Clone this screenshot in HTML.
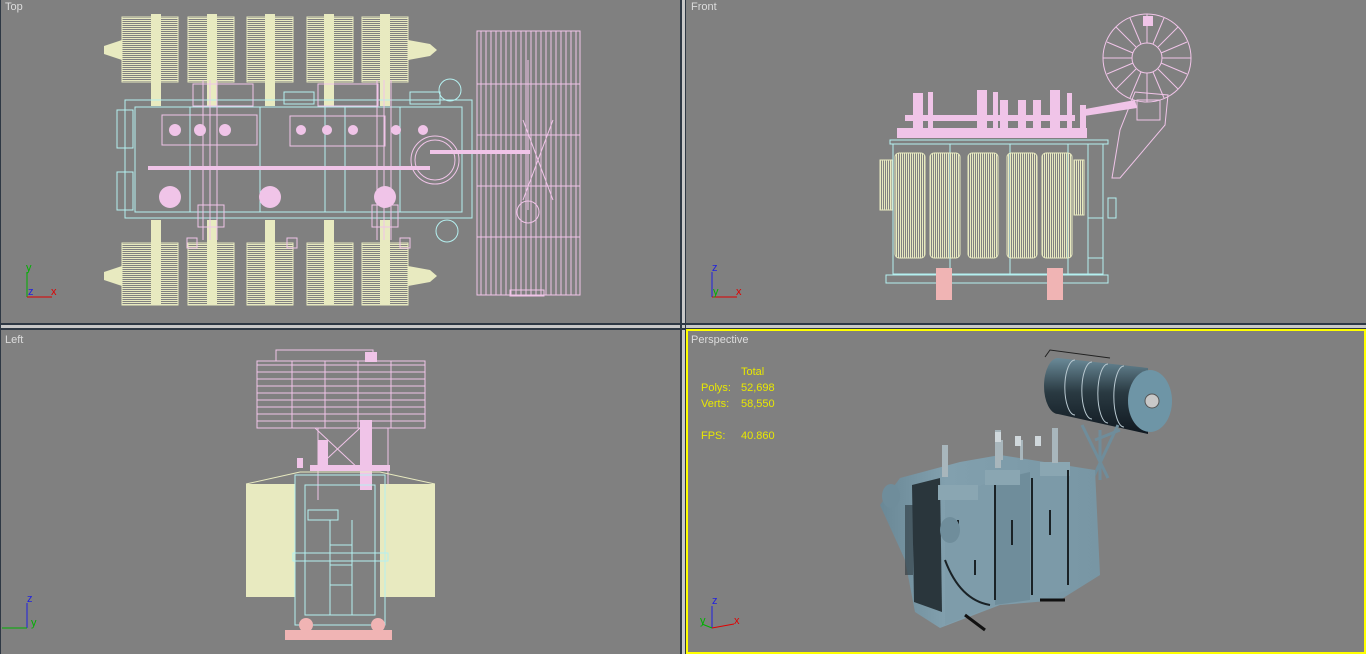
<!DOCTYPE html>
<html><head><meta charset="utf-8"><style>
html,body{margin:0;padding:0;background:#c8c8c8;width:1366px;height:654px;overflow:hidden}
svg{display:block}
text{font-family:"Liberation Sans",sans-serif;font-size:11px}
</style></head><body>
<svg width="1366" height="654" viewBox="0 0 1366 654" xmlns="http://www.w3.org/2000/svg">
<defs>
<pattern id="hy" width="4" height="2" patternUnits="userSpaceOnUse"><line x1="0" y1="0.5" x2="4" y2="0.5" stroke="#e8eac0" stroke-width="1"/></pattern>
<pattern id="vy" width="2" height="4" patternUnits="userSpaceOnUse"><line x1="0.5" y1="0" x2="0.5" y2="4" stroke="#e8eac0" stroke-width="1"/></pattern>
<pattern id="vp" width="5" height="4" patternUnits="userSpaceOnUse"><line x1="1" y1="0" x2="1" y2="4" stroke="#f0c4e8" stroke-width="1"/></pattern>
<linearGradient id="cyl" x1="0" y1="0" x2="0" y2="1"><stop offset="0" stop-color="#6a8a98"/><stop offset="0.45" stop-color="#2a3a42"/><stop offset="1" stop-color="#101820"/></linearGradient>
<linearGradient id="body" x1="0" y1="0" x2="1" y2="0"><stop offset="0" stop-color="#6a8896"/><stop offset="0.3" stop-color="#82a0ae"/><stop offset="1" stop-color="#7896a4"/></linearGradient>
</defs>
<rect x="0" y="0" width="1366" height="654" fill="#c8c8c8"/>
<rect x="1" y="0" width="679" height="323" fill="#808080"/>
<rect x="686" y="0" width="680" height="323" fill="#808080"/>
<rect x="1" y="330" width="679" height="324" fill="#808080"/>
<rect x="686" y="330" width="680" height="324" fill="#808080"/>
<rect x="0" y="0" width="1" height="654" fill="#2e3844"/>
<rect x="680" y="0" width="2" height="654" fill="#2e3844"/>
<rect x="685" y="0" width="1" height="654" fill="#2e3844"/>
<rect x="0" y="323" width="1366" height="2" fill="#2e3844"/>
<rect x="0" y="328" width="1366" height="2" fill="#2e3844"/>
<rect x="687" y="330" width="678" height="323" fill="none" stroke="#ffff00" stroke-width="2"/>

<text x="5" y="10" fill="#dcdcdc">Top</text>
<text x="691" y="10" fill="#dcdcdc">Front</text>
<text x="5" y="343" fill="#dcdcdc">Left</text>
<text x="691" y="343" fill="#dcdcdc">Perspective</text>
<g fill="#e8e800">
<text x="741" y="375">Total</text>
<text x="701" y="391">Polys:</text><text x="741" y="391">52,698</text>
<text x="701" y="407">Verts:</text><text x="741" y="407">58,550</text>
<text x="701" y="439">FPS:</text><text x="741" y="439">40.860</text>
</g>

<g font-size="9">
<g transform="translate(27,297)"><line x1="0" y1="0" x2="0" y2="-25" stroke="#00b000"/><line x1="0" y1="0" x2="25" y2="0" stroke="#e00000"/><text x="-1" y="-26" fill="#00b000" font-size="9">y</text><text x="1" y="-2" fill="#2020e0" font-size="9">z</text><text x="24" y="-2" fill="#e00000" font-size="9">x</text></g>
<g transform="translate(712,297)"><line x1="0" y1="0" x2="0" y2="-25" stroke="#2020e0"/><line x1="0" y1="0" x2="25" y2="0" stroke="#e00000"/><text x="0" y="-26" fill="#2020e0" font-size="9">z</text><text x="1" y="-2" fill="#00b000" font-size="9">y</text><text x="24" y="-2" fill="#e00000" font-size="9">x</text></g>
<g transform="translate(27,628)"><line x1="0" y1="0" x2="0" y2="-25" stroke="#2020e0"/><line x1="0" y1="0" x2="-25" y2="0" stroke="#00b000"/><text x="0" y="-26" fill="#2020e0" font-size="9">z</text><text x="4" y="-2" fill="#00b000" font-size="9">y</text></g>
<g transform="translate(712,628)"><line x1="0" y1="0" x2="0" y2="-22" stroke="#2020e0"/><line x1="0" y1="0" x2="-10" y2="-4" stroke="#00b000"/><line x1="0" y1="0" x2="22" y2="-4" stroke="#e00000"/><text x="0" y="-24" fill="#2020e0" font-size="9">z</text><text x="-12" y="-4" fill="#00b000" font-size="9">y</text><text x="22" y="-4" fill="#e00000" font-size="9">x</text></g>
</g>

<!-- TOP VIEW -->
<g>
<g fill="url(#hy)" stroke="#e8eac0">
<rect x="122" y="17" width="56" height="65"/><rect x="188" y="17" width="46" height="65"/><rect x="247" y="17" width="46" height="65"/><rect x="307" y="17" width="46" height="65"/><rect x="362" y="17" width="46" height="65"/>
<rect x="122" y="243" width="56" height="62"/><rect x="188" y="243" width="46" height="62"/><rect x="247" y="243" width="46" height="62"/><rect x="307" y="243" width="46" height="62"/><rect x="362" y="243" width="46" height="62"/>
</g>
<g fill="#e8eac0">
<rect x="151" y="14" width="10" height="92"/><rect x="207" y="14" width="10" height="92"/><rect x="265" y="14" width="10" height="92"/><rect x="324" y="14" width="10" height="92"/><rect x="380" y="14" width="10" height="92"/>
<rect x="151" y="220" width="10" height="85"/><rect x="207" y="220" width="10" height="85"/><rect x="265" y="220" width="10" height="85"/><rect x="324" y="220" width="10" height="85"/><rect x="380" y="220" width="10" height="85"/>
<polygon points="104,46 122,40 122,60 104,54"/><polygon points="408,40 430,44 437,50 430,56 408,60"/>
<polygon points="104,272 122,266 122,286 104,280"/><polygon points="408,266 430,270 437,276 430,282 408,286"/>
</g>
<g fill="none" stroke="#b4f0f0">
<rect x="125" y="100" width="347" height="118"/>
<rect x="135" y="107" width="327" height="105"/>
<line x1="190" y1="107" x2="190" y2="212"/><line x1="260" y1="107" x2="260" y2="212"/><line x1="325" y1="107" x2="325" y2="212"/><line x1="345" y1="107" x2="345" y2="212"/><line x1="400" y1="107" x2="400" y2="212"/>
<rect x="117" y="110" width="16" height="38"/><rect x="117" y="172" width="16" height="38"/>
<circle cx="450" cy="90" r="11"/><circle cx="447" cy="231" r="11"/>
<rect x="284" y="92" width="30" height="12"/><rect x="410" y="92" width="30" height="12"/>
</g>
<g fill="none" stroke="#f0c4e8">
<rect x="162" y="115" width="95" height="30"/><rect x="290" y="116" width="95" height="30"/>
<circle cx="435" cy="160" r="24"/><circle cx="435" cy="160" r="20"/>
<rect x="193" y="84" width="60" height="22"/><rect x="318" y="84" width="60" height="22"/>
<line x1="203" y1="80" x2="203" y2="240"/><line x1="210" y1="80" x2="210" y2="240"/><line x1="217" y1="80" x2="217" y2="240"/>
<line x1="377" y1="80" x2="377" y2="240"/><line x1="384" y1="80" x2="384" y2="240"/><line x1="391" y1="80" x2="391" y2="240"/>
<rect x="198" y="205" width="26" height="22"/><rect x="372" y="205" width="26" height="22"/>
<rect x="187" y="238" width="10" height="10"/><rect x="287" y="238" width="10" height="10"/><rect x="400" y="238" width="10" height="10"/>
</g>
<g fill="#f0c4e8">
<circle cx="175" cy="130" r="6"/><circle cx="200" cy="130" r="6"/><circle cx="225" cy="130" r="6"/>
<circle cx="301" cy="130" r="5"/><circle cx="327" cy="130" r="5"/><circle cx="353" cy="130" r="5"/><circle cx="396" cy="130" r="5"/><circle cx="423" cy="130" r="5"/>
<circle cx="170" cy="197" r="11"/><circle cx="270" cy="197" r="11"/><circle cx="385" cy="197" r="11"/>
<rect x="430" y="150" width="100" height="4"/><rect x="148" y="166" width="282" height="4"/>
</g>
<rect x="477" y="31" width="103" height="264" fill="url(#vp)" stroke="#f0c4e8"/>
<g stroke="#f0c4e8" fill="none">
<line x1="477" y1="84" x2="580" y2="84"/><line x1="477" y1="135" x2="580" y2="135"/><line x1="477" y1="186" x2="580" y2="186"/><line x1="477" y1="237" x2="580" y2="237"/>
<line x1="528" y1="60" x2="528" y2="210"/><line x1="523" y1="120" x2="553" y2="200"/><line x1="553" y1="120" x2="523" y2="200"/>
<circle cx="528" cy="212" r="11"/><rect x="510" y="290" width="34" height="6"/>
</g>
</g>

<!-- FRONT VIEW -->
<g>
<g fill="none" stroke="#f0c4e8">
<circle cx="1147" cy="58" r="44"/><circle cx="1147" cy="58" r="15"/>
<line x1="1147" y1="14" x2="1147" y2="43"/><line x1="1147" y1="73" x2="1147" y2="102"/><line x1="1103" y1="58" x2="1132" y2="58"/><line x1="1162" y1="58" x2="1191" y2="58"/>
<line x1="1116" y1="27" x2="1136" y2="47"/><line x1="1158" y1="69" x2="1178" y2="89"/><line x1="1178" y1="27" x2="1158" y2="47"/><line x1="1136" y1="69" x2="1116" y2="89"/>
<line x1="1130" y1="18" x2="1141" y2="44"/><line x1="1164" y1="18" x2="1153" y2="44"/><line x1="1130" y1="98" x2="1141" y2="72"/><line x1="1164" y1="98" x2="1153" y2="72"/>
<line x1="1107" y1="42" x2="1133" y2="53"/><line x1="1187" y1="42" x2="1161" y2="53"/><line x1="1107" y1="74" x2="1133" y2="63"/><line x1="1187" y1="74" x2="1161" y2="63"/>
<polygon points="1135,92 1168,95 1165,125 1120,178 1112,178 1120,130"/>
<polygon points="1137,100 1160,100 1160,120 1137,120"/>
</g>
<rect x="1143" y="16" width="10" height="10" fill="#f0c4e8"/>
<g fill="#f0c4e8">
<rect x="913" y="93" width="10" height="45"/><rect x="928" y="92" width="5" height="46"/><rect x="977" y="90" width="10" height="48"/><rect x="993" y="92" width="5" height="46"/><rect x="1050" y="90" width="10" height="48"/><rect x="1067" y="93" width="5" height="45"/>
<rect x="1000" y="100" width="8" height="38"/><rect x="1018" y="100" width="8" height="38"/><rect x="1033" y="100" width="8" height="38"/>
<rect x="905" y="115" width="170" height="6"/><rect x="897" y="128" width="190" height="10"/><rect x="1080" y="105" width="6" height="33"/>
<polygon points="1080,110 1135,100 1137,108 1084,116"/>
</g>
<g fill="none" stroke="#b4f0f0">
<rect x="890" y="140" width="218" height="4"/>
<rect x="893" y="144" width="210" height="130"/>
<rect x="886" y="275" width="222" height="8"/>
<line x1="950" y1="144" x2="950" y2="274"/><line x1="1010" y1="144" x2="1010" y2="274"/><line x1="1068" y1="144" x2="1068" y2="274"/><line x1="1088" y1="144" x2="1088" y2="274"/>
<rect x="1088" y="218" width="15" height="40"/><rect x="1108" y="198" width="8" height="20"/>
</g>
<g fill="url(#vy)" stroke="#e8eac0">
<rect x="895" y="153" width="30" height="105" rx="4"/><rect x="930" y="153" width="30" height="105" rx="4"/><rect x="968" y="153" width="30" height="105" rx="4"/><rect x="1007" y="153" width="30" height="105" rx="4"/><rect x="1042" y="153" width="30" height="105" rx="4"/>
<rect x="880" y="160" width="12" height="50"/><rect x="1074" y="160" width="10" height="55"/>
</g>
<g fill="#f0b4b4"><rect x="936" y="268" width="16" height="32"/><rect x="1047" y="268" width="16" height="32"/></g>
</g>

<!-- LEFT VIEW -->
<g>
<g stroke="#f0c4e8" fill="none">
<rect x="257" y="361" width="168" height="67"/>
<line x1="257" y1="365" x2="425" y2="365"/><line x1="257" y1="372" x2="425" y2="372"/><line x1="257" y1="379" x2="425" y2="379"/><line x1="257" y1="386" x2="425" y2="386"/><line x1="257" y1="393" x2="425" y2="393"/><line x1="257" y1="400" x2="425" y2="400"/><line x1="257" y1="407" x2="425" y2="407"/><line x1="257" y1="414" x2="425" y2="414"/><line x1="257" y1="421" x2="425" y2="421"/>
<line x1="292" y1="361" x2="292" y2="428"/><line x1="325" y1="361" x2="325" y2="428"/><line x1="358" y1="361" x2="358" y2="428"/><line x1="391" y1="361" x2="391" y2="428"/>
<polyline points="276,361 276,350 373,350 373,360"/>
<line x1="315" y1="428" x2="360" y2="470"/><line x1="360" y1="428" x2="315" y2="470"/>
<line x1="318" y1="428" x2="318" y2="500"/><line x1="388" y1="428" x2="388" y2="500"/>
</g>
<g fill="#f0c4e8"><rect x="365" y="352" width="12" height="10"/><rect x="360" y="420" width="12" height="70"/><rect x="318" y="440" width="10" height="30"/><rect x="310" y="465" width="80" height="6"/><rect x="297" y="458" width="6" height="10"/></g>
<g fill="#e8eac0"><rect x="246" y="484" width="49" height="113"/><rect x="380" y="484" width="55" height="113"/></g>
<polyline points="246,484 300,472 380,472 435,484" fill="none" stroke="#e8eac0"/>
<g fill="none" stroke="#b4f0f0">
<rect x="295" y="475" width="90" height="150"/><rect x="305" y="485" width="70" height="130"/>
<rect x="308" y="510" width="30" height="10"/><line x1="330" y1="520" x2="330" y2="615"/><line x1="352" y1="520" x2="352" y2="615"/>
<line x1="330" y1="545" x2="352" y2="545"/><line x1="330" y1="565" x2="352" y2="565"/><line x1="330" y1="585" x2="352" y2="585"/>
<rect x="293" y="553" width="95" height="8"/>
</g>
<g fill="#f0b4b4"><rect x="285" y="630" width="107" height="10"/><circle cx="306" cy="625" r="7"/><circle cx="378" cy="625" r="7"/></g>
</g>

<!-- PERSPECTIVE -->
<g>
<polyline points="1045,357 1050,350 1110,358" fill="none" stroke="#222"/>
<path d="M1058,358 L1148,368 L1148,434 L1058,414 A14,28 0 0 1 1058,358 Z" fill="url(#cyl)"/>
<ellipse cx="1150" cy="401" rx="22" ry="31" fill="#6e95a6"/>
<circle cx="1152" cy="401" r="7" fill="#c8c8c8" stroke="#555"/>
<g stroke="#b8c8d0" fill="none"><path d="M1075,360 A10,27 0 0 0 1075,415"/><path d="M1092,362 A10,28 0 0 0 1092,419"/><path d="M1108,364 A10,29 0 0 0 1108,423"/><path d="M1124,366 A10,30 0 0 0 1124,427"/></g>
<g stroke="#6f8d9b" stroke-width="3" fill="none"><line x1="1082" y1="425" x2="1108" y2="478"/><line x1="1118" y1="425" x2="1092" y2="480"/><line x1="1100" y1="430" x2="1100" y2="480"/><line x1="1095" y1="440" x2="1120" y2="430"/></g>
<polygon points="900,478 960,462 1000,455 1095,470 1100,575 1060,600 1000,605 940,628 915,612 905,560 880,505" fill="url(#body)"/>
<polygon points="912,485 940,478 942,612 914,602" fill="#2a363c"/>
<polygon points="945,500 990,482 995,605 945,625" fill="#7e9caa"/>
<polygon points="995,480 1030,472 1030,600 995,605" fill="#6f8d9b"/>
<polygon points="1035,470 1070,465 1070,590 1035,598" fill="#7c9aa8"/>
<g fill="#8aa6b2"><rect x="938" y="485" width="40" height="15"/><rect x="985" y="470" width="35" height="15"/><rect x="1040" y="462" width="30" height="14"/></g>
<g stroke="#1a2226" stroke-width="2">
<line x1="995" y1="485" x2="995" y2="600"/><line x1="1032" y1="478" x2="1032" y2="595"/><line x1="1068" y1="470" x2="1068" y2="585"/>
<line x1="958" y1="520" x2="958" y2="535"/><line x1="975" y1="560" x2="975" y2="575"/><line x1="1012" y1="520" x2="1012" y2="545"/><line x1="1050" y1="510" x2="1050" y2="535"/>
<path d="M945,560 Q960,600 990,605" fill="none"/>
</g>
<g fill="#a8b6bc"><rect x="942" y="445" width="6" height="32"/><rect x="995" y="430" width="6" height="38"/><rect x="1052" y="428" width="6" height="35"/><rect x="1000" y="440" width="3" height="20"/><rect x="1020" y="440" width="3" height="20"/></g>
<g fill="#d0d8dc"><rect x="995" y="432" width="6" height="10"/><rect x="1015" y="436" width="6" height="10"/><rect x="1035" y="436" width="6" height="10"/></g>
<g fill="#2a363c"><rect x="905" y="505" width="8" height="70" opacity="0.6"/></g>
<ellipse cx="891" cy="496" rx="9" ry="12" fill="#6f8d9b"/><ellipse cx="950" cy="530" rx="10" ry="13" fill="#6f8d9b"/>
<g stroke="#111" stroke-width="3"><line x1="965" y1="615" x2="985" y2="630"/><line x1="1040" y1="600" x2="1065" y2="600"/></g>
</g>
</svg>
</body></html>
